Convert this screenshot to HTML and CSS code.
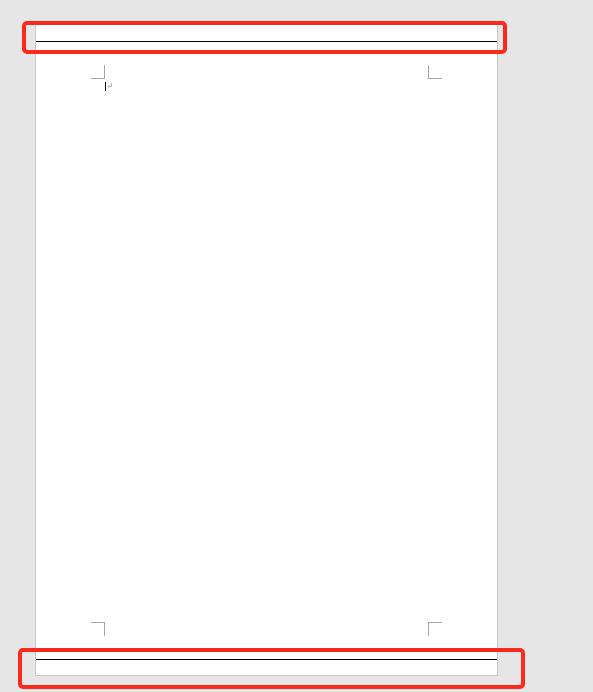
FILE: index.html
```html
<!DOCTYPE html>
<html lang="zh">
<head>
<meta charset="utf-8">
<title>页眉页脚</title>
<link rel="stylesheet" href="styles.css">
</head>
<body>
<div class="page">
  <div class="header"></div>
  <div class="textarea">
    <span class="mark mark-tl"></span>
    <span class="mark mark-tr"></span>
    <span class="mark mark-bl"></span>
    <span class="mark mark-br"></span>
    <div class="line">
      <span class="cursor"></span>
      <svg class="para" width="5" height="5" viewBox="0 0 5 5"><path d="M4.5 0 V3.5 H0.8 M2 2.3 L0.8 3.5 L2 4.7" fill="none" stroke="#b5b5b5" stroke-width="1"/></svg>
    </div>
  </div>
  <div class="footer"></div>
</div>
<div class="callout callout-top"></div>
<div class="callout callout-bottom"></div>
</body>
</html>
```

FILE: styles.css
```css
html, body {
  margin: 0;
  padding: 0;
}
body {
  background: #e6e6e6;
  width: 593px;
  height: 692px;
  overflow: hidden;
  position: relative;
  font-family: "Liberation Sans", Arial, sans-serif;
}
.page {
  margin: 24px 0 0 35px;
  width: 461px;
  height: 650px;
  background: #ffffff;
  border: 1px solid #c8c8c8;
  display: flex;
  flex-direction: column;
}
.header {
  height: 16px;
  border-bottom: 1px solid #000000;
}
.textarea {
  position: relative;
  margin: 37px 0 0 69px;
  width: 323px;
  height: 543px;
}
.mark {
  position: absolute;
  width: 13px;
  height: 13px;
  border: 0 solid #a6a6a6;
}
.mark-tl {
  left: -14px;
  top: -14px;
  border-right-width: 1px;
  border-bottom-width: 1px;
}
.mark-tr {
  left: 100%;
  top: -14px;
  border-left-width: 1px;
  border-bottom-width: 1px;
}
.mark-bl {
  left: -14px;
  top: 100%;
  border-right-width: 1px;
  border-top-width: 1px;
}
.mark-br {
  left: 100%;
  top: 100%;
  border-left-width: 1px;
  border-top-width: 1px;
}
.line {
  display: flex;
  align-items: flex-start;
  padding-top: 3px;
  height: 12px;
}
.cursor {
  width: 1px;
  height: 9px;
  background: #000000;
}
.para {
  display: block;
  margin: 1px 0 0 1px;
}
.footer {
  margin-top: auto;
  height: 15px;
  border-top: 1px solid #000000;
}
.callout {
  position: absolute;
  border: 4px solid #fb2a1d;
  border-radius: 5px;
  box-sizing: border-box;
}
.callout-top {
  left: 22px;
  top: 21px;
  width: 485px;
  height: 33px;
}
.callout-bottom {
  left: 18px;
  top: 648px;
  width: 507px;
  height: 41px;
}
```
